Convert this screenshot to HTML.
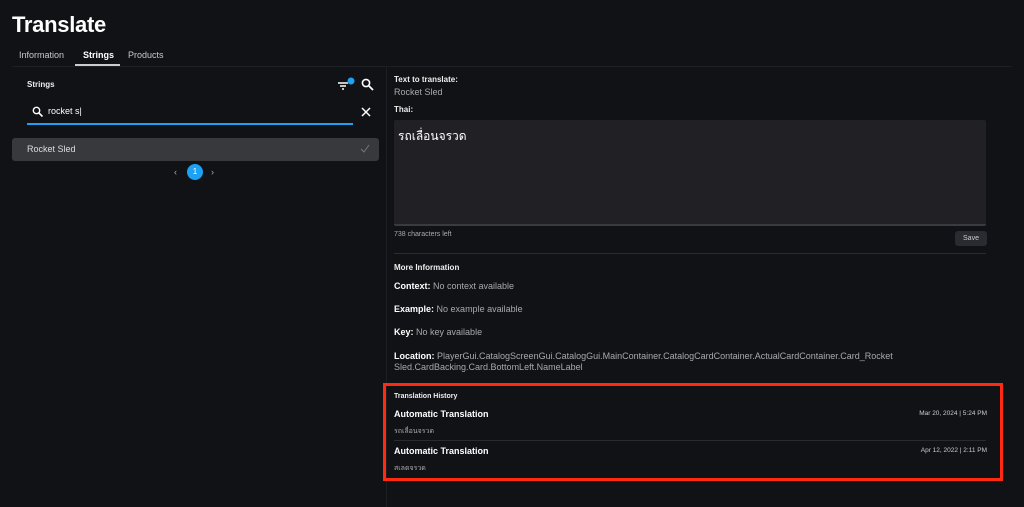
<!DOCTYPE html>
<html><head><meta charset="utf-8"><style>
*{margin:0;padding:0;box-sizing:border-box}
body{width:1024px;height:507px;background:#111216;color:#fff;font-family:"Liberation Sans",sans-serif;position:relative;overflow:hidden}
.a{position:absolute}
.lbl{font-size:8px;font-weight:bold;color:#eee}
.g{color:#a8a9ad}
</style></head><body>
<div class="a" style="left:12px;top:12px;font-size:22px;font-weight:bold;letter-spacing:-0.3px">Translate</div>
<div class="a g" style="left:19px;top:50px;font-size:9px;color:#c8c9cc">Information</div>
<div class="a" style="left:83px;top:50px;font-size:9px;font-weight:bold">Strings</div>
<div class="a" style="left:75px;top:64px;width:45px;height:2px;background:#ccc"></div>
<div class="a g" style="left:128px;top:50px;font-size:9px;color:#c8c9cc">Products</div>
<div class="a" style="left:12px;top:66px;width:1000px;height:1px;background:#1e1f24"></div>
<div class="a" style="left:386px;top:67px;width:1px;height:440px;background:#1e1f24"></div>

<div class="a lbl" style="left:27px;top:80px">Strings</div>
<svg class="a" style="left:336px;top:77px" width="20" height="14"><path d="M2 6h10M4 9h6M6 12h2" stroke="#fff" stroke-width="1.5"/><circle cx="15" cy="4" r="3.5" fill="#1da1f2"/></svg>
<svg class="a" style="left:361px;top:78px" width="13" height="13"><circle cx="5" cy="5" r="3.6" stroke="#fff" stroke-width="1.6" fill="none"/><path d="M8 8l4 4" stroke="#fff" stroke-width="1.8"/></svg>
<svg class="a" style="left:32px;top:106px" width="11" height="11"><circle cx="4.5" cy="4.5" r="3.2" stroke="#fff" stroke-width="1.4" fill="none"/><path d="M7 7l3.5 3.5" stroke="#fff" stroke-width="1.6"/></svg>
<div class="a" style="left:48px;top:106px;font-size:9px">rocket s|</div>
<svg class="a" style="left:361px;top:107px" width="10" height="10"><path d="M1 1l8 8M9 1l-8 8" stroke="#fff" stroke-width="1.5"/></svg>
<div class="a" style="left:27px;top:123px;width:326px;height:2px;background:#1da1f2"></div>
<div class="a" style="left:12px;top:138px;width:367px;height:23px;background:#38393d;border-radius:3px"></div>
<div class="a" style="left:27px;top:144px;font-size:9px;color:#ddd">Rocket Sled</div>
<svg class="a" style="left:360px;top:144px" width="10" height="9"><path d="M1 5l3 3 5-7" stroke="#777" stroke-width="1" fill="none"/></svg>
<div class="a" style="left:174px;top:167px;font-size:9px;color:#aaa">‹</div>
<div class="a" style="left:187px;top:164px;width:16px;height:16px;border-radius:50%;background:#1da1f2;font-size:8px;text-align:center;line-height:16px">1</div>
<div class="a" style="left:211px;top:167px;font-size:9px;color:#aaa">›</div>

<div class="a lbl" style="left:394px;top:75px">Text to translate:</div>
<div class="a g" style="left:394px;top:87px;font-size:9px">Rocket Sled</div>
<div class="a lbl" style="left:394px;top:105px">Thai:</div>
<div class="a" style="left:394px;top:120px;width:592px;height:106px;background:#202025;border-radius:2px;border-bottom:2px solid #3a3b40"></div>
<div class="a" style="left:398px;top:127px;font-size:12px">รถเลื่อนจรวด</div>
<div class="a g" style="left:394px;top:231px;font-size:7px">738 characters left</div>
<div class="a" style="left:955px;top:231px;width:32px;height:15px;background:#2a2b30;border-radius:3px;font-size:7px;text-align:center;line-height:15px;color:#ccc">Save</div>
<div class="a" style="left:394px;top:253px;width:592px;height:1px;background:#2a2b30"></div>
<div class="a lbl" style="left:394px;top:263px">More Information</div>
<div class="a" style="left:394px;top:281px;font-size:9px"><b>Context:</b> <span class="g">No context available</span></div>
<div class="a" style="left:394px;top:304px;font-size:9px"><b>Example:</b> <span class="g">No example available</span></div>
<div class="a" style="left:394px;top:327px;font-size:9px"><b>Key:</b> <span class="g">No key available</span></div>
<div class="a" style="left:394px;top:351px;width:500px;font-size:9px;line-height:11px"><b>Location:</b> <span class="g">PlayerGui.CatalogScreenGui.CatalogGui.MainContainer.CatalogCardContainer.ActualCardContainer.Card_Rocket Sled.CardBacking.Card.BottomLeft.NameLabel</span></div>

<div class="a" style="left:383px;top:383px;width:620px;height:98px;border:3px solid #ff2a10"></div>
<div class="a lbl" style="left:394px;top:393px;font-size:7px">Translation History</div>
<div class="a" style="left:394px;top:409px;font-size:9px;font-weight:bold">Automatic Translation</div>
<div class="a g" style="left:880px;top:410px;width:107px;text-align:right;font-size:6.5px;color:#ccc">Mar 20, 2024 | 5:24 PM</div>
<div class="a g" style="left:394px;top:426px;font-size:7px">รถเลื่อนจรวด</div>
<div class="a" style="left:394px;top:440px;width:592px;height:1px;background:#2a2b30"></div>
<div class="a" style="left:394px;top:446px;font-size:9px;font-weight:bold">Automatic Translation</div>
<div class="a g" style="left:880px;top:447px;width:107px;text-align:right;font-size:6.5px;color:#ccc">Apr 12, 2022 | 2:11 PM</div>
<div class="a g" style="left:394px;top:463px;font-size:7px">สเลดจรวด</div>
</body></html>
